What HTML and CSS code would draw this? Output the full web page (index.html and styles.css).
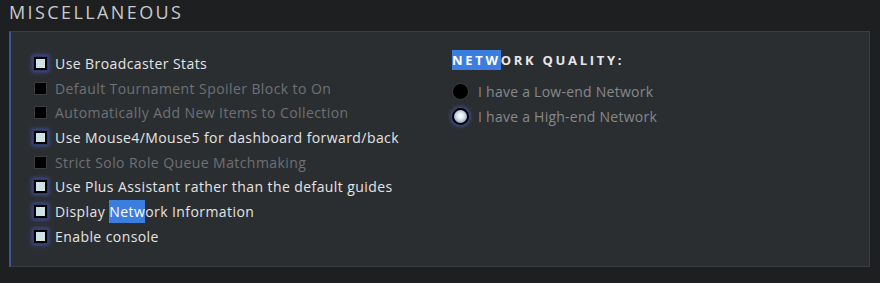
FILE: index.html
```html
<!DOCTYPE html>
<html lang="en">
<head>
    <meta charset="UTF-8">
    <title>Miscellaneous</title>
    <link rel="stylesheet" href="styles.css">
</head>
<body>
    <h2 class="section-title">MISCELLANEOUS</h2>
    <div class="panel">
        <div class="options">
            <label class="option"><span class="box checked"></span><span>Use Broadcaster Stats</span></label>
            <label class="option disabled"><span class="box"></span><span>Default Tournament Spoiler Block to On</span></label>
            <label class="option disabled"><span class="box"></span><span>Automatically Add New Items to Collection</span></label>
            <label class="option"><span class="box checked"></span><span>Use Mouse4/Mouse5 for dashboard forward/back</span></label>
            <label class="option disabled"><span class="box"></span><span>Strict Solo Role Queue Matchmaking</span></label>
            <label class="option"><span class="box checked"></span><span>Use Plus Assistant rather than the default guides</span></label>
            <label class="option"><span class="box checked"></span><span>Display <span class="sel">Netw</span>ork Information</span></label>
            <label class="option"><span class="box checked"></span><span>Enable console</span></label>
        </div>
        <div class="network">
            <div class="network-title"><span class="sel">NETW</span>ORK QUALITY:</div>
            <label class="radio-option"><span class="radio"></span><span>I have a Low-end Network</span></label>
            <label class="radio-option"><span class="radio checked"></span><span>I have a High-end Network</span></label>
        </div>
    </div>
</body>
</html>
```

FILE: styles.css
```css
body {
    margin: 0;
    background-color: #1e1f21;
    font-family: 'Open Sans', sans-serif;
    height: 283px;
    overflow: hidden;
}

.section-title {
    margin: 0;
    padding: 1px 0 0 9px;
    height: 31px;
    box-sizing: border-box;
    font-size: 18px;
    font-weight: 400;
    letter-spacing: 2.4px;
    color: #c9cacb;
    line-height: 22px;
}

.panel {
    display: flex;
    margin-left: 9px;
    width: 861px;
    height: 236px;
    box-sizing: border-box;
    background-color: #2b2e31;
    border: 1px solid #3a3e42;
    border-left: 2px solid #3f5597;
    padding: 19px 0 0 23px;
}

.options {
    width: 418px;
    display: flex;
    flex-direction: column;
}

.option {
    display: flex;
    align-items: center;
    height: 24.7px;
    font-size: 14px;
    letter-spacing: 0.42px;
    color: #e3e4e4;
    white-space: nowrap;
}

.option.disabled {
    color: #6d7175;
}

.box {
    width: 13px;
    height: 13px;
    box-sizing: border-box;
    margin-right: 8px;
    background-color: #000;
    border: 1px solid #3b3d40;
    flex-shrink: 0;
}

.box.checked {
    background-color: #cfe3e5;
    border: 2px solid #000;
    box-shadow: 0 0 0 1px #2e3a6c, 0 0 4px 2px #44509c;
}

.sel {
    background-color: #3c7de0;
    color: #fff;
    padding: 2px 0;
}

.network {
    display: flex;
    flex-direction: column;
}

.network-title {
    font-size: 13px;
    font-weight: 700;
    letter-spacing: 2.7px;
    color: #e6e7e8;
    height: 22px;
    line-height: 18px;
    margin-bottom: 6px;
}

.network-title .sel {
    padding: 1px 0;
}

.radio-option {
    display: flex;
    align-items: center;
    height: 25px;
    font-size: 14px;
    letter-spacing: 0.25px;
    color: #86898c;
}

.radio {
    width: 17px;
    height: 17px;
    box-sizing: border-box;
    border-radius: 50%;
    background-color: #000;
    border: 1px solid #3c3e41;
    margin-right: 9px;
    flex-shrink: 0;
}

.radio.checked {
    border: 2px solid #000;
    background: radial-gradient(circle at 50% 45%, #ffffff 0, #dce6f0 35%, #98a4bc 75%);
    box-shadow: 0 0 0 1px #36438a, 0 0 4px 1px #4a58a8;
}
```
